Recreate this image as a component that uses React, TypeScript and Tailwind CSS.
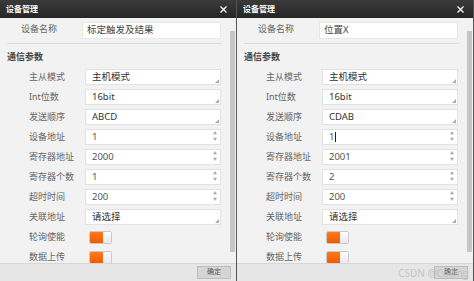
import React from 'react';

type Field = {
    label: string;
    value: string;
    kind: 'select' | 'number' | 'switch';
    caret?: boolean;
};

function buildFields(order: string, regAddr: string, regCount: string, caret: boolean): Field[] {
    return [
        { label: '主从模式', value: '主机模式', kind: 'select' },
        { label: 'Int位数', value: '16bit', kind: 'select' },
        { label: '发送顺序', value: order, kind: 'select' },
        { label: '设备地址', value: '1', kind: 'number', caret },
        { label: '寄存器地址', value: regAddr, kind: 'number' },
        { label: '寄存器个数', value: regCount, kind: 'number' },
        { label: '超时时间', value: '200', kind: 'number' },
        { label: '关联地址', value: '请选择', kind: 'select' },
        { label: '轮询使能', value: '', kind: 'switch' },
        { label: '数据上传', value: '', kind: 'switch' },
    ];
}

function Toggle() {
    return (
        <div className="flex h-[13px] w-[23px] overflow-hidden rounded-[2px] border border-[#c9c9c9]">
            <div className="w-[13px] bg-gradient-to-b from-[#ff7a1a] to-[#f05a00]" />
            <div className="flex-1 bg-gradient-to-b from-white to-[#e8e8e8]" />
        </div>
    );
}

function FieldRow({ field }: { field: Field }) {
    const numeric = field.kind === 'number';
    return (
        <div className="flex h-[20px] items-center">
            <div className="w-[85px] shrink-0 pl-[29px] text-[9px] whitespace-nowrap text-[#666]">{field.label}</div>
            {field.kind === 'switch' ? (
                <div className="pl-[4px]">
                    <Toggle />
                </div>
            ) : (
                <div className="relative flex h-[16px] w-[136px] items-center border border-[#e2e2e2] bg-white pl-[6px] text-[9.5px] text-[#333]">
                    <span className={numeric ? 'text-[#555]' : ''}>{field.value}</span>
                    {field.caret && <span className="ml-[1px] h-[10px] w-[1px] bg-[#222]" />}
                    {numeric ? (
                        <div className="absolute right-[3px] top-[1px] flex flex-col items-center text-[4px] leading-[6px] text-[#aaa]">
                            <span>▲</span>
                            <span>▼</span>
                        </div>
                    ) : (
                        <svg className="absolute right-[1px] bottom-[1px]" width="4" height="4" viewBox="0 0 4 4">
                            <path d="M4 0 L4 4 L0 4 Z" fill="#aaa" />
                        </svg>
                    )}
                </div>
            )}
        </div>
    );
}

function Panel({ deviceName, fields, watermark }: { deviceName: string; fields: Field[]; watermark?: boolean }) {
    return (
        <div className="flex h-[281px] w-[237px] flex-col border-r border-[#555] bg-[#f2f2f2]">
            {/* Title */}
            <div className="flex h-[18px] shrink-0 items-center justify-between bg-gradient-to-b from-[#3a3a3a] to-[#262626] pl-[6px] pr-[9px]">
                <span className="text-[8px] font-bold text-white">设备管理</span>
                <svg width="7" height="7" viewBox="0 0 7 7">
                    <path d="M0.5 0.5 L6.5 6.5 M6.5 0.5 L0.5 6.5" stroke="#fff" strokeWidth="1.3" />
                </svg>
            </div>

            {/* Body */}
            <div className="flex min-h-0 flex-1 overflow-hidden">
                <div className="w-[229px]">
                    <div className="flex h-[21px] items-end">
                        <div className="w-[82px] shrink-0 pl-[21px] pb-[4px] text-[9px] text-[#666]">设备名称</div>
                        <div className="flex h-[17px] w-[139px] items-center border border-[#e6e6e6] bg-white pl-[4px] text-[9.5px] text-[#444]">
                            {deviceName}
                        </div>
                    </div>
                    <div className="mx-[7px] mt-[4px] h-[1px] bg-[#dcdcdc]" />
                    <div className="flex h-[23px] items-center pl-[7px] pt-[3px] text-[9px] font-bold text-[#444]">通信参数</div>
                    <div>
                        {fields.map((f) => (
                            <FieldRow key={f.label} field={f} />
                        ))}
                    </div>
                </div>
                <div className="flex w-[7px] flex-col pt-[13px] pb-[11px] pl-[1px]">
                    <div className="w-[5px] flex-1 bg-[#c6c6c6]" />
                </div>
            </div>

            {/* Footer */}
            <div className="relative flex h-[18px] shrink-0 items-center justify-end border-t border-[#d6d6d6] bg-[#e6e6e6] pr-[5px]">
                <div className="flex h-[13px] w-[34px] items-center justify-center border border-[#bdbdbd] bg-[#d5d5d5] text-[7px] text-[#555]">
                    确定
                </div>
                {watermark && (
                    <span className="absolute right-[4px] top-[2px] text-[10px] whitespace-nowrap text-[#bdbdbd] opacity-80">
                        CSDN @Coiling
                    </span>
                )}
            </div>
        </div>
    );
}

export default function App() {
    return (
        <div
            className="flex h-[281px] w-[474px] overflow-hidden"
            style={{ fontFamily: '"Noto Sans", "Noto Sans CJK SC", sans-serif' }}
        >
            <Panel deviceName="标定触发及结果" fields={buildFields('ABCD', '2000', '1', false)} />
            <Panel deviceName="位置X" fields={buildFields('CDAB', '2001', '2', true)} watermark />
        </div>
    );
}
